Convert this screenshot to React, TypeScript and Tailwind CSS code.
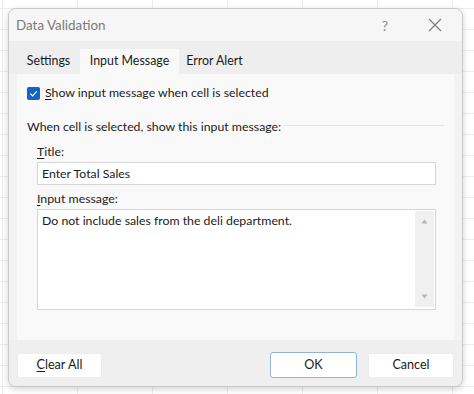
import React from 'react';

const font = "font-['Lato',sans-serif]";

const Underlined: React.FC<{ first: string; rest: string }> = ({ first, rest }) => (
  <span>
    <span className="underline underline-offset-2">{first}</span>
    {rest}
  </span>
);

const TabButton: React.FC<{ label: string; active?: boolean; width: string }> = ({ label, active, width }) => (
  <div
    className={`${width} h-[25px] flex items-center justify-center text-[12.4px] ${
      active ? 'bg-[#f9f9f9] text-[#1b1b1b]' : 'text-[#1b1b1b]'
    }`}
  >
    {label}
  </div>
);

const App: React.FC = () => {
  return (
    <div
      className={`${font} w-[474px] h-[394px] overflow-hidden bg-white bg-[linear-gradient(to_right,#ececec_1px,transparent_1px),linear-gradient(to_bottom,#ececec_1px,transparent_1px)] bg-[size:75px_21px] bg-[position:2px_8px] pt-[8px] pl-[8px]`}
    >
      <div className="w-[455px] h-[379px] rounded-[8px] border border-[#c9c9c9] bg-[#f3f3f3] shadow-[0_2px_6px_rgba(0,0,0,0.18)] flex flex-col overflow-hidden">
        {/* title bar */}
        <div className="h-[32px] flex items-center pl-[7px] pr-[20px] bg-[#f6f6f6] shrink-0">
          <span className="text-[13.4px] text-[#7a7a7a] flex-1">Data Validation</span>
          <span className="text-[14px] text-[#8a8a8a] mr-[40px]">?</span>
          <svg width="14" height="14" viewBox="0 0 14 14" className="text-[#7a7a7a]">
            <path d="M1 1L13 13M13 1L1 13" stroke="currentColor" strokeWidth="1.1" />
          </svg>
        </div>

        {/* tabs */}
        <div className="h-[33px] bg-[#eeeeee] flex items-end px-[8px] shrink-0">
          <TabButton label="Settings" width="w-[63px]" />
          <TabButton label="Input Message" width="w-[99px]" active />
          <TabButton label="Error Alert" width="w-[71px]" />
        </div>

        {/* panel */}
        <div className="mx-[8px] h-[266px] bg-[#f9f9f9] px-[10px] pt-[11px] text-[12.3px] leading-[20px] text-[#1b1b1b] shrink-0">
          <div className="flex items-center gap-[5px] h-[16px]">
            <div className="w-[13px] h-[13px] rounded-[2px] bg-[#1464c4] flex items-center justify-center">
              <svg width="9" height="9" viewBox="0 0 10 10">
                <path d="M1.5 5.2L4 7.6L8.6 2.6" fill="none" stroke="white" strokeWidth="1.3" />
              </svg>
            </div>
            <Underlined first="S" rest="how input message when cell is selected" />
          </div>

          <div className="flex items-center mt-[16px] h-[20px]">
            <span className="whitespace-nowrap">When cell is selected, show this input message:</span>
            <div className="flex-1 h-px bg-[#e3e3e3] ml-[3px] -mt-[4px]" />
          </div>

          <div className="pl-[10px] pr-[8px]">
            <div className="mt-[5px] h-[20px] flex items-center">
              <Underlined first="T" rest="itle:" />
            </div>
            <div className="h-[23px] bg-white border border-[#d6d6d6] flex items-center pl-[4px]">
              Enter Total Sales
            </div>
            <div className="mt-[4px] h-[20px] flex items-center">
              <Underlined first="I" rest="nput message:" />
            </div>
            <div className="h-[101px] bg-white border border-[#d6d6d6] flex pl-[4px] pt-[1px] pr-[1px] pb-[2px]">
              <div className="flex-1 leading-[20px]">Do not include sales from the deli department.</div>
              <div className="w-[19px] bg-[#f0f0f0] flex flex-col items-center justify-between py-[8px]">
                <svg width="7" height="5" viewBox="0 0 7 5">
                  <path d="M3.5 0.5L6.5 4.5H0.5Z" fill="#b5b5b5" />
                </svg>
                <svg width="7" height="5" viewBox="0 0 7 5">
                  <path d="M0.5 0.5H6.5L3.5 4.5Z" fill="#b5b5b5" />
                </svg>
              </div>
            </div>
          </div>
        </div>

        {/* footer */}
        <div className="flex-1 flex items-start px-[8px] pt-[13px] bg-[#efefef] text-[12.6px] text-[#1b1b1b]">
          <button className="w-[85px] h-[25px] bg-white border border-[#ececec] rounded-[2px] flex items-center justify-center">
            <Underlined first="C" rest="lear All" />
          </button>
          <div className="flex-1" />
          <button className="w-[87px] h-[26px] -mt-px bg-white border border-[#8fb3db] rounded-[3px] flex items-center justify-center">
            OK
          </button>
          <button className="ml-[11px] w-[86px] h-[25px] bg-white border border-[#ececec] rounded-[2px] flex items-center justify-center">
            Cancel
          </button>
        </div>
      </div>
    </div>
  );
};

export default App;
